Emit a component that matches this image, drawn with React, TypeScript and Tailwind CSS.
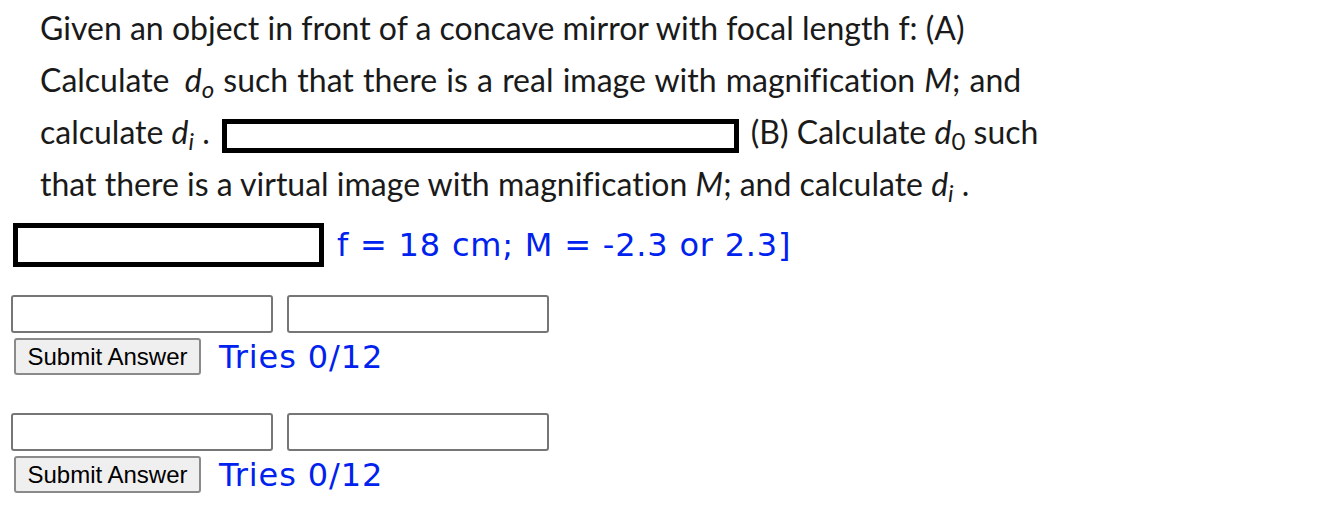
import React from "react";

const Sub = ({ children, italic = true }: { children: React.ReactNode; italic?: boolean }) => (
  <sub className={italic ? "italic" : "not-italic"}>{children}</sub>
);

const D = ({ s, italicSub = true }: { s: string; italicSub?: boolean }) => (
  <span>
    <span className="italic">d</span>
    <Sub italic={italicSub}>{s}</Sub>
  </span>
);

const AnswerGroup = () => (
  <div className="flex flex-col">
    <div className="flex gap-[14px]">
      <input className="w-[262px] h-[38px] border-2 border-[#767676] rounded-[3px] bg-white" />
      <input className="w-[262px] h-[38px] border-2 border-[#767676] rounded-[3px] bg-white" />
    </div>
    <div className="flex items-center mt-[5px] ml-[3px]">
      <button className="w-[187px] h-[37px] bg-[#efefef] border-2 border-[#8a8a8a] rounded-[3px] text-[24px] text-black font-['Liberation_Sans',Arial,sans-serif] leading-none">
        Submit Answer
      </button>
      <span className="ml-[18px] text-[32px] tracking-[0.9px] text-[#0022ee] font-['DejaVu_Sans',Verdana,sans-serif] leading-none">
        Tries 0/12
      </span>
    </div>
  </div>
);

export default function App() {
  return (
    <div className="w-[1326px] h-[510px] bg-white overflow-hidden">
      <div className="pt-[2px] pl-[40px] text-[32px] leading-[52px] text-[#1a1a1a] font-['Lato','Open_Sans',sans-serif] [font-variant-ligatures:none]">
        <div className="whitespace-nowrap">Given an object in front of a concave mirror with focal length f: (A)</div>
        <div className="whitespace-nowrap [word-spacing:1px]">
          Calculate <span className="ml-[6px]"><D s="o" /></span> such that there is a real image with magnification{" "}
          <span className="italic">M</span>; and
        </div>
        <div className="whitespace-nowrap">
          calculate <D s="i" /> .
          <span className="inline-block w-[517px] h-[34px] border-[5px] border-black align-[-9px] ml-[12px] mr-[12px]" />
          (B) Calculate <D s="0" italicSub={false} /> such
        </div>
        <div className="whitespace-nowrap">
          that there is a virtual image with magnification <span className="italic">M</span>; and calculate{" "}
          <D s="i" /> .
        </div>
      </div>
      <div className="flex items-center gap-[13px] mt-[13px] pl-[13px]">
        <span className="w-[311px] h-[44px] border-[5px] border-black" />
        <span className="text-[32px] leading-none text-[#0022ee] font-['DejaVu_Sans',Verdana,sans-serif] tracking-[0.8px] whitespace-nowrap">
          f = 18 cm; M = -2.3 or 2.3]
        </span>
      </div>
      <div className="pl-[11px] mt-[28px] flex flex-col gap-[38px]">
        <AnswerGroup />
        <AnswerGroup />
      </div>
    </div>
  );
}
